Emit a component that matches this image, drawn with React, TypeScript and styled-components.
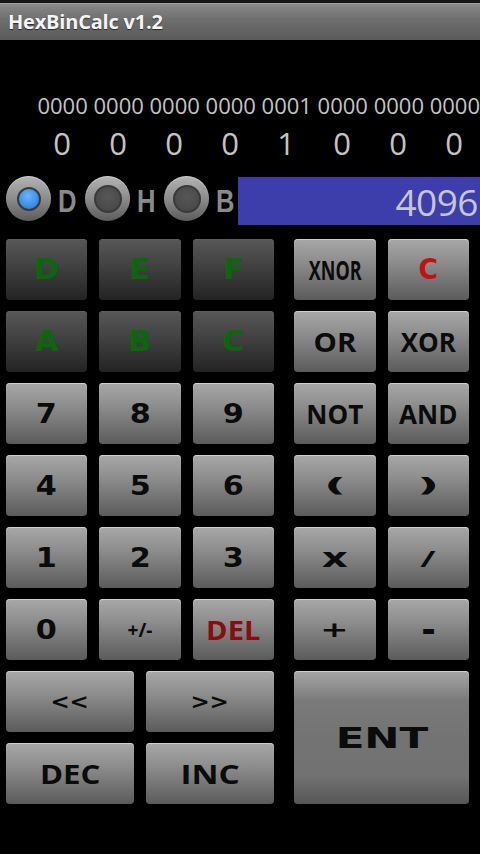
import React from "react";
import styled, { createGlobalStyle, css } from "styled-components";

const GlobalStyle = createGlobalStyle`
  html, body {
    margin: 0;
    padding: 0;
    background: #000;
  }
  body {
    width: 480px;
    height: 854px;
    overflow: hidden;
    font-family: "Open Sans", "DejaVu Sans", sans-serif;
  }
`;

const Screen = styled.div`
  width: 480px;
  height: 854px;
  background: #000;
  display: flex;
  flex-direction: column;
`;

const StatusStrip = styled.div`
  height: 3px;
  background: #151515;
`;

const TitleBar = styled.div`
  height: 37px;
  display: flex;
  align-items: center;
  padding-left: 8px;
  background: linear-gradient(to bottom, #8a8a8a 0%, #6e6e6e 45%, #5a5a5a 100%);
  box-shadow: inset 0 1px 0 #a0a0a0;
`;

const Title = styled.h1`
  margin: 0;
  font-family: "Open Sans", "DejaVu Sans", sans-serif;
  font-weight: 700;
  font-size: 20px;
  color: #f4f4f4;
  text-shadow: 0 1px 1px rgba(0, 0, 0, 0.6);
  letter-spacing: -0.2px;
`;

const BinaryLine = styled.div`
  margin-top: 52px;
  height: 26px;
  line-height: 26px;
  font-size: 22px;
  color: #c4c4c4;
  text-align: right;
  white-space: nowrap;
`;

const NibbleRow = styled.div`
  margin-top: 7px;
  height: 36px;
  display: grid;
  grid-template-columns: repeat(8, 56px);
  padding-left: 34px;
`;

const Nibble = styled.span`
  font-size: 31px;
  line-height: 36px;
  color: #c4c4c4;
  text-align: center;
`;

const RadioRow = styled.div`
  margin-top: 15px;
  height: 49px;
  display: flex;
  align-items: flex-start;
  padding-left: 6px;
`;

const Options = styled.div`
  display: flex;
  gap: 8px;
`;

const Option = styled.label`
  display: flex;
  align-items: center;
  gap: 7px;
  height: 45px;
`;

const Radio = styled.span<{ $on?: boolean }>`
  width: 45px;
  height: 45px;
  border-radius: 50%;
  display: flex;
  align-items: center;
  justify-content: center;
  background: linear-gradient(to bottom, #b4b4b4 0%, #8c8c8c 50%, #5c5c5c 100%);
  box-shadow: inset 0 1px 1px rgba(255, 255, 255, 0.35);

  &::after {
    content: "";
    width: ${(p) => (p.$on ? "20px" : "24px")};
    height: ${(p) => (p.$on ? "20px" : "24px")};
    border-radius: 50%;
    border: 2px solid #3a3a3a;
    background: ${(p) =>
      p.$on
        ? "radial-gradient(circle at 45% 35%, #6ab4ff 0%, #3a8fe6 60%, #2a6fc0 100%)"
        : "radial-gradient(circle at 50% 40%, #575757 0%, #4a4a4a 70%, #3c3c3c 100%)"};
  }
`;

const OptionLetter = styled.span`
  display: inline-block;
  width: 19px;
  font-family: "Liberation Sans", sans-serif;
  font-weight: 700;
  font-size: 32px;
  color: #8a8a8a;
  line-height: 45px;
  padding-top: 6px;
  transform: scaleX(0.8);
  transform-origin: left center;
`;

const ValueBox = styled.div`
  flex: 1;
  margin-left: 3px;
  margin-top: 1px;
  height: 48px;
  background: #3d3dab;
  display: flex;
  align-items: center;
  justify-content: flex-end;
  padding-right: 2px;
  font-size: 37px;
  color: #c6c6d2;
  letter-spacing: -0.5px;
`;

const Keypad = styled.div`
  margin-top: 14px;
  display: flex;
  padding: 0 11px 0 6px;
  gap: 20px;
`;

const LeftPad = styled.div`
  width: 268px;
  display: grid;
  grid-template-columns: repeat(6, 1fr);
  grid-auto-rows: 61px;
  gap: 11px 12px;
`;

const RightPad = styled.div`
  width: 175px;
  display: grid;
  grid-template-columns: repeat(2, 1fr);
  grid-auto-rows: 61px;
  gap: 11px 12px;
`;

type Face = "hex" | "digit" | "word" | "wide" | "small";

const faces: Record<Face, ReturnType<typeof css>> = {
  hex: css`
    font-family: "DejaVu Sans", sans-serif;
    font-weight: 700;
    font-size: 28px;
  `,
  digit: css`
    font-family: "DejaVu Sans", sans-serif;
    font-weight: 700;
    font-size: 27px;
  `,
  word: css`
    font-family: "Open Sans", sans-serif;
    font-weight: 700;
    font-size: 26px;
  `,
  wide: css`
    font-family: "DejaVu Sans", sans-serif;
    font-weight: 700;
    font-size: 29px;
  `,
  small: css`
    font-family: "Open Sans", sans-serif;
    font-weight: 700;
    font-size: 19px;
  `,
};

const Key = styled.button<{
  $dark?: boolean;
  $span?: number;
  $rows?: number;
  $ink?: string;
  $face: Face;
  $tall?: boolean;
}>`
  grid-column: span ${(p) => p.$span ?? 1};
  grid-row: span ${(p) => p.$rows ?? 1};
  border: none;
  padding: 0;
  margin: 0;
  border-radius: 4px;
  display: flex;
  align-items: center;
  justify-content: center;
  color: ${(p) => p.$ink ?? "#0b0b0b"};
  ${(p) => faces[p.$face]}
  background: ${(p) =>
    p.$dark
      ? "linear-gradient(to bottom, #575757 0%, #464646 35%, #333 70%, #232323 100%)"
      : p.$tall
      ? "linear-gradient(to bottom, #a6a6a6 0px, #7a7a7a 30px, #737373 50%, #727272 calc(100% - 28px), #565656 100%)"
      : "linear-gradient(to bottom, #a8a8a8 0%, #8f8f8f 35%, #737373 70%, #5b5b5b 100%)"};
  box-shadow: ${(p) =>
    p.$dark ? "inset 0 1px 0 #5e5e5e" : "inset 0 1px 0 #cdcdcd"};
`;

const Label = styled.span<{ $sx: number; $sy: number }>`
  display: inline-block;
  transform: scale(${(p) => p.$sx}, ${(p) => p.$sy});
`;

type PadProps = {
  label: React.ReactNode;
  face: Face;
  sx?: number;
  sy?: number;
  span?: number;
  rows?: number;
  dark?: boolean;
  tall?: boolean;
  ink?: string;
};

function Pad({ label, face, sx = 1, sy = 1, span, rows, dark, tall, ink }: PadProps) {
  return (
    <Key $face={face} $span={span} $rows={rows} $dark={dark} $tall={tall} $ink={ink}>
      <Label $sx={sx} $sy={sy}>{label}</Label>
    </Key>
  );
}

const hexGreen = "#0a680a";

export default function App() {
  const nibbles = ["0", "0", "0", "0", "1", "0", "0", "0"];
  return (
    <Screen>
      <GlobalStyle />
      <StatusStrip />
      <TitleBar>
        <Title>HexBinCalc v1.2</Title>
      </TitleBar>

      <BinaryLine>0000 0000 0000 0000 0001 0000 0000 0000</BinaryLine>
      <NibbleRow>
        {nibbles.map((n, i) => (
          <Nibble key={i}>{n}</Nibble>
        ))}
      </NibbleRow>

      <RadioRow>
        <Options>
          <Option>
            <Radio $on />
            <OptionLetter>D</OptionLetter>
          </Option>
          <Option>
            <Radio />
            <OptionLetter>H</OptionLetter>
          </Option>
          <Option>
            <Radio />
            <OptionLetter>B</OptionLetter>
          </Option>
        </Options>
        <ValueBox>4096</ValueBox>
      </RadioRow>

      <Keypad>
        <LeftPad>
          {["D", "E", "F", "A", "B", "C"].map((h) => (
            <Pad key={h} label={h} face="hex" sx={1.08} span={2} dark ink={hexGreen} />
          ))}
          {["7", "8", "9", "4", "5", "6", "1", "2", "3", "0"].map((d) => (
            <Pad key={d} label={d} face="digit" sx={1.12} span={2} />
          ))}
          <Pad label="+/-" face="small" span={2} />
          <Pad label="DEL" face="word" sx={1.12} span={2} ink="#8a0c0c" />
          <Pad label="<<" face="digit" sx={0.85} sy={0.8} span={3} />
          <Pad label=">>" face="digit" sx={0.85} sy={0.8} span={3} />
          <Pad label="DEC" face="word" sx={1.2} span={3} />
          <Pad label="INC" face="word" sx={1.28} span={3} />
        </LeftPad>

        <RightPad>
          <Pad label="XNOR" face="word" sx={0.69} />
          <Pad label="C" face="hex" sx={0.95} ink="#c41010" />
          <Pad label="OR" face="word" sx={1.13} />
          <Pad label="XOR" face="word" />
          <Pad label="NOT" face="word" />
          <Pad label="AND" face="word" />
          <Pad label="(" face="digit" sx={1.8} sy={0.72} />
          <Pad label=")" face="digit" sx={1.8} sy={0.72} />
          <Pad label="x" face="digit" sx={1.5} />
          <Pad label="/" face="digit" sx={1.5} sy={0.75} />
          <Pad label="+" face="digit" sx={1.25} sy={0.8} />
          <Pad label="-" face="digit" sx={1.3} sy={1.3} />
          <Pad label="ENT" face="wide" sx={1.45} span={2} rows={2} tall />
        </RightPad>
      </Keypad>
    </Screen>
  );
}
